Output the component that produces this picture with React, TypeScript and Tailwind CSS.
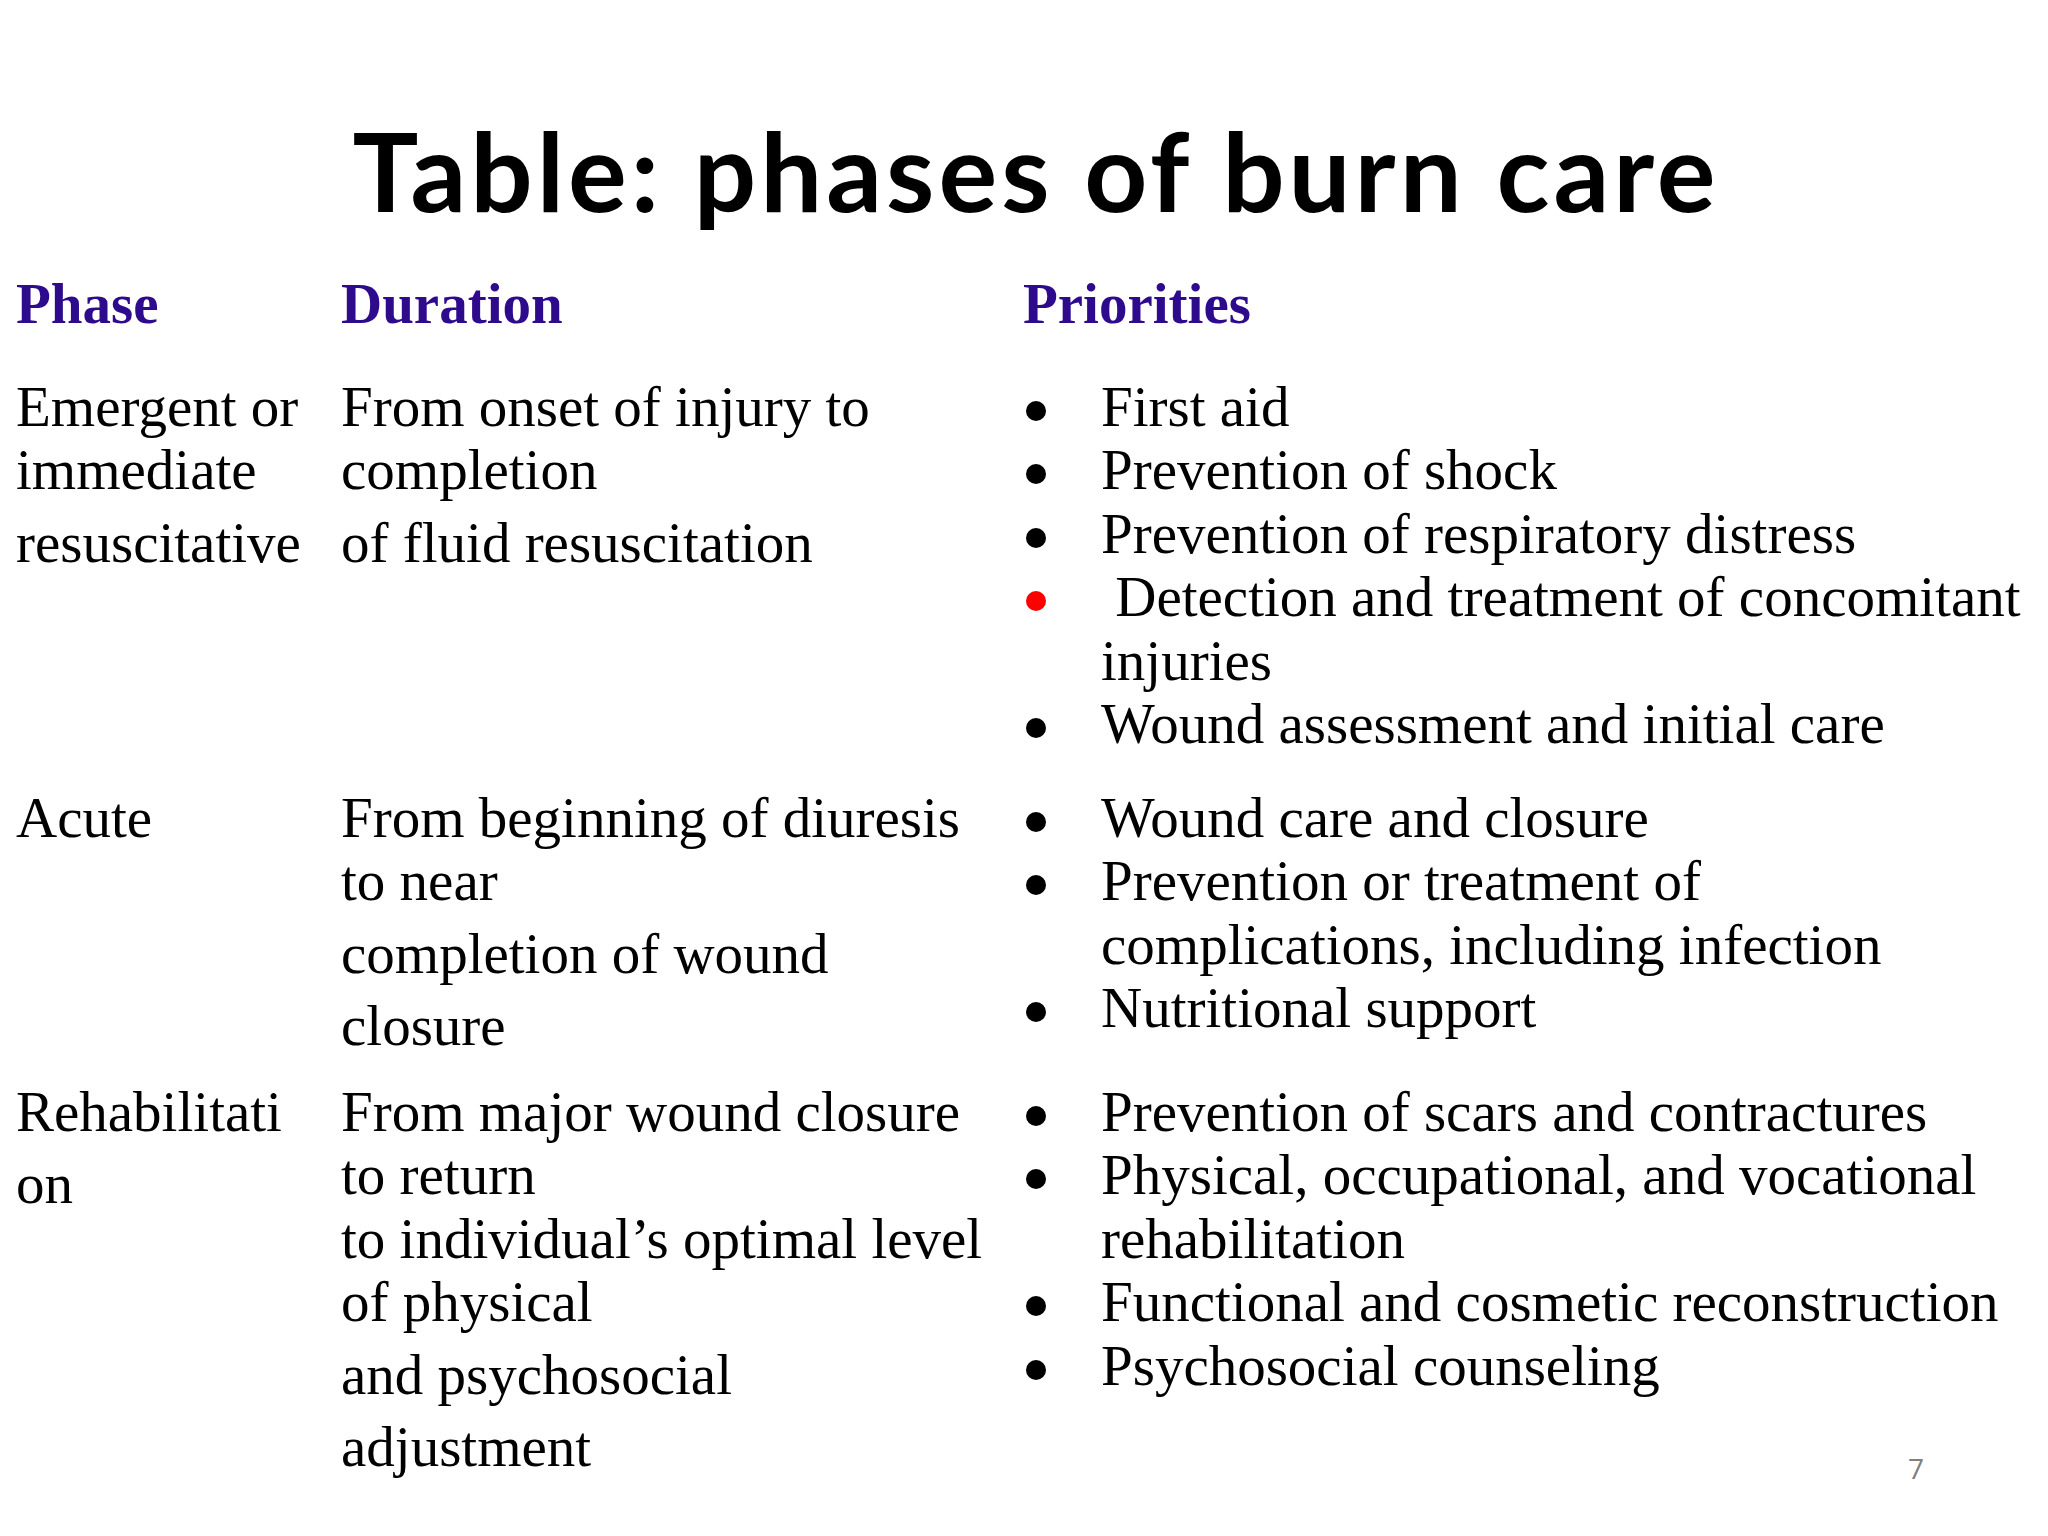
import React from "react";

type Para = string[];

const serif = "font-['Liberation_Serif','Times_New_Roman',serif]";

function Paras({ paras }: { paras: Para[] }) {
  return (
    <div className="flex flex-col gap-[9px]">
      {paras.map((p, i) => (
        <p key={i} className="whitespace-nowrap">
          {p.map((l, j) => (
            <React.Fragment key={j}>
              {j > 0 && <br />}
              {l}
            </React.Fragment>
          ))}
        </p>
      ))}
    </div>
  );
}

type Item = { lines: string[]; red?: boolean };

function Bullets({ items }: { items: Item[] }) {
  return (
    <div className="flex flex-col">
      {items.map((it, i) => (
        <div key={i} className="flex">
          <div className="w-[77px] shrink-0 pl-[2px] pt-[26px]">
            <div className={`w-[20px] h-[20px] rounded-full ${it.red ? "bg-[#ff0000]" : "bg-black"}`} />
          </div>
          <p className="whitespace-nowrap">
            {it.lines.map((l, j) => (
              <React.Fragment key={j}>
                {j > 0 && <br />}
                {l}
              </React.Fragment>
            ))}
          </p>
        </div>
      ))}
    </div>
  );
}

const rows: { h: string; phase: Para[]; duration: Para[]; items: Item[] }[] = [
  {
    h: "h-[411px]",
    phase: [["Emergent or", "immediate"], ["resuscitative"]],
    duration: [["From onset of injury to", "completion"], ["of fluid resuscitation"]],
    items: [
      { lines: ["First aid"] },
      { lines: ["Prevention of shock"] },
      { lines: ["Prevention of respiratory distress"] },
      { lines: ["\u00a0Detection and treatment of concomitant", "injuries"], red: true },
      { lines: ["Wound assessment and initial care"] },
    ],
  },
  {
    h: "h-[294px]",
    phase: [["Acute"]],
    duration: [["From beginning of diuresis", "to near"], ["completion of wound"], ["closure"]],
    items: [
      { lines: ["Wound care and closure"] },
      { lines: ["Prevention or treatment of", "complications, including infection"] },
      { lines: ["Nutritional support"] },
    ],
  },
  {
    h: "h-[456px]",
    phase: [["Rehabilitati"], ["on"]],
    duration: [
      ["From major wound closure", "to return", "to individual\u2019s optimal level", "of physical"],
      ["and psychosocial"],
      ["adjustment"],
    ],
    items: [
      { lines: ["Prevention of scars and contractures"] },
      { lines: ["Physical, occupational, and vocational", "rehabilitation"] },
      { lines: ["Functional and cosmetic reconstruction"] },
      { lines: ["Psychosocial counseling"] },
    ],
  },
];

export default function App() {
  return (
    <div className="relative w-[2048px] h-[1536px] bg-white overflow-hidden text-black">
      <h1 className="pt-[114px] pl-[24px] text-center font-['Lato','Open_Sans',sans-serif] font-bold text-[110px] leading-[110px] tracking-[4px] whitespace-nowrap">
        Table: phases of burn care
      </h1>
      <div className={`mt-[48px] ${serif} text-[57px] leading-[63.4px]`}>
        <div className="flex h-[103px] font-bold text-[#2e0a8c]">
          <div className="w-[341px] pl-[16px] shrink-0">Phase</div>
          <div className="w-[682px] shrink-0">Duration</div>
          <div>Priorities</div>
        </div>
        {rows.map((r, i) => (
          <div key={i} className={`flex ${r.h}`}>
            <div className="w-[341px] pl-[16px] shrink-0">
              <Paras paras={r.phase} />
            </div>
            <div className="w-[682px] shrink-0">
              <Paras paras={r.duration} />
            </div>
            <div className="pl-[1px]">
              <Bullets items={r.items} />
            </div>
          </div>
        ))}
      </div>
      <div className="absolute left-[1908px] top-[1449px] font-['Open_Sans',sans-serif] text-[28px] leading-[38px] text-[#7f7f7f]">
        7
      </div>
    </div>
  );
}
